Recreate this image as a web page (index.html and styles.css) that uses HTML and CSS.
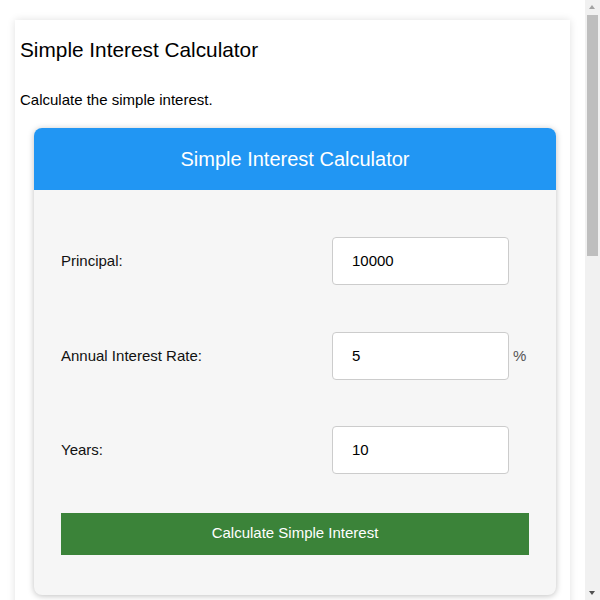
FILE: index.html
```html
<!DOCTYPE html>
<html lang="en">
<head>
<meta charset="utf-8">
<title>Simple Interest Calculator</title>
<link rel="stylesheet" href="styles.css">
</head>
<body>
<div class="page">
  <div class="card">
    <h1 class="title">Simple Interest Calculator</h1>
    <p class="intro">Calculate the simple interest.</p>
    <div class="calc">
      <div class="calc-head">Simple Interest Calculator</div>
      <div class="calc-body">
        <div class="row">
          <label class="label" for="p">Principal:</label>
          <div class="field"><input class="input" id="p" type="text" value="10000"></div>
        </div>
        <div class="row">
          <label class="label" for="r">Annual Interest Rate:</label>
          <div class="field"><input class="input" id="r" type="text" value="5"><span class="unit">%</span></div>
        </div>
        <div class="row">
          <label class="label" for="y">Years:</label>
          <div class="field"><input class="input" id="y" type="text" value="10"></div>
        </div>
        <button class="btn" type="button">Calculate Simple Interest</button>
      </div>
    </div>
  </div>
</div>
<div class="scrollbar" aria-hidden="true">
  <span class="arrow arrow-up"></span>
  <span class="thumb"></span>
  <span class="arrow arrow-down"></span>
</div>
</body>
</html>
```
FILE: styles.css
```css
html, body {
  margin: 0;
  padding: 0;
  background: #ffffff;
  font-family: "Liberation Sans", Arial, sans-serif;
  color: #111;
}
html {
  scrollbar-width: none;
}
.page {
  padding: 20px 30px 20px 15px;
}
.card {
  background: #fff;
  padding: 5px;
  min-height: 1375px;
  box-shadow: 0 0 8px rgba(0, 0, 0, 0.12);
}
.title {
  margin: 13px 0 0;
  font-size: 20.8px;
  line-height: 24px;
  font-weight: normal;
  color: #000;
}
.intro {
  margin: 29px 0 0;
  font-size: 15px;
  line-height: 18px;
  color: #000;
}
.calc {
  margin: 19px 0 0 14px;
  width: 522px;
  border-radius: 8px;
  overflow: hidden;
  background: #f6f6f6;
  box-shadow: 0 1px 6px rgba(0, 0, 0, 0.25);
}
.calc-head {
  background: #2196f3;
  color: #fff;
  height: 62px;
  line-height: 62px;
  text-align: center;
  font-size: 20px;
}
.calc-body {
  display: flex;
  flex-direction: column;
  gap: 46.5px;
  padding: 47px 27px 40px;
}
.row {
  display: grid;
  grid-template-columns: 271px 1fr;
  align-items: center;
}
.label {
  font-size: 15px;
  line-height: 17px;
  padding-bottom: 1px;
  color: #111;
}
.field {
  display: flex;
  align-items: center;
  gap: 4px;
}
.input {
  box-sizing: border-box;
  width: 177px;
  height: 48px;
  padding: 0 0 1px 19px;
  border: 1px solid #cccccc;
  border-radius: 4px;
  background: #fff;
  font-family: "Liberation Sans", Arial, sans-serif;
  font-size: 15px;
  color: #000;
}
.unit {
  font-size: 15px;
  color: #555;
}
.btn {
  margin-top: -7.5px;
  height: 42px;
  padding: 0 0 3px;
  border: 0;
  background: #3b8339;
  color: #fff;
  font-family: "Liberation Sans", Arial, sans-serif;
  font-size: 15px;
}
.scrollbar {
  position: fixed;
  top: 0;
  right: 0;
  width: 15px;
  height: 100vh;
  background: #f1f1f1;
}
.thumb {
  position: absolute;
  left: 2px;
  top: 15px;
  width: 11px;
  height: 241px;
  background: #bebebe;
}
.arrow {
  position: absolute;
  left: 4px;
  width: 0;
  height: 0;
  border-left: 3.5px solid transparent;
  border-right: 3.5px solid transparent;
}
.arrow-up {
  top: 5px;
  border-bottom: 4px solid #a3a3a3;
}
.arrow-down {
  bottom: 5px;
  border-top: 4px solid #505050;
}
```
